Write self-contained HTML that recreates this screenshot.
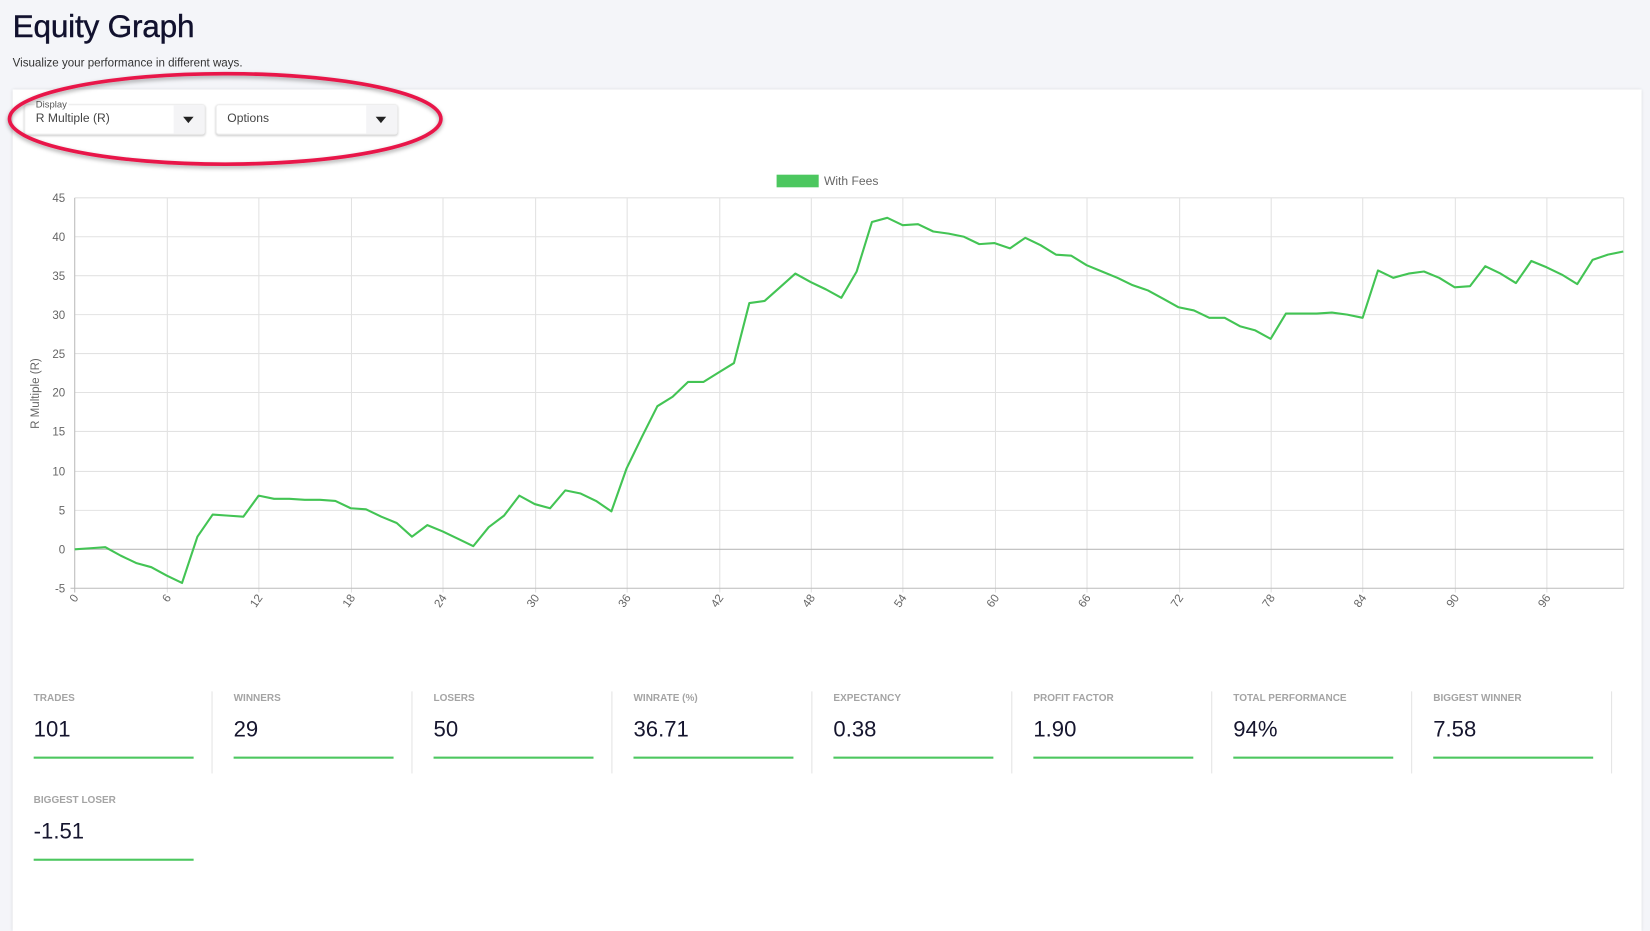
<!DOCTYPE html>
<html><head><meta charset="utf-8"><style>
html,body{margin:0;padding:0;width:1650px;height:898px;overflow:hidden;background:#f4f5f9;font-family:"Liberation Sans",sans-serif}
#w{position:absolute;left:0;top:0;width:1568px;height:854px;transform:scale(1.05230);transform-origin:0 0}
.a{position:absolute}
h1{position:absolute;left:12px;top:9px;margin:0;font-size:30px;font-weight:normal;color:#11112e;letter-spacing:-0.2px;-webkit-text-stroke:0.4px #11112e}
.sub{left:12px;top:54px;font-size:11px;color:#333}
.card{left:12px;top:85px;width:1548px;height:800px;background:#fff;box-shadow:0 0 3px rgba(0,0,0,.15)}
.sel{height:29px;background:#fff;border-radius:3px;box-shadow:0 1px 2px rgba(0,0,0,.2);border:1px solid #eee;box-sizing:border-box}
.sel .t{position:absolute;left:10px;top:7px;font-size:11.5px;color:#444}
.sel .b{position:absolute;right:0;top:0;width:29px;height:27px;background:#f4f4f6}
.sel .b:after{content:"";position:absolute;left:9px;top:11px;border-left:5px solid transparent;border-right:5px solid transparent;border-top:6px solid #222}
.st{position:absolute;width:190px;height:78px}
.st .l{position:absolute;left:20px;top:1px;font-size:9.5px;font-weight:bold;color:#a4a4a4}
.st .v{position:absolute;left:20px;top:25px;font-size:21px;color:#15152e}
.st .g{position:absolute;left:20px;top:62px;width:152px;height:2px;background:#4cc75f}
.st .s{position:absolute;right:0;top:0;width:1px;height:78px;background:#e4e4e4}
</style></head><body><div id="w">
<h1>Equity Graph</h1>
<div class="a sub">Visualize your performance in different ways.</div>
<div class="a card"></div>
<div class="a sel" style="left:23px;top:99px;width:172px"><div class="t">R Multiple (R)</div><div class="b"></div></div>
<div class="a" style="left:33px;top:94px;font-size:9px;color:#555;background:#fff;padding:0 1px">Display</div>
<div class="a sel" style="left:205px;top:99px;width:173px"><div class="t">Options</div><div class="b"></div></div>
<svg class="a" style="left:0;top:0" width="1568" height="640">
<defs><filter id="sh"><feDropShadow dx="0" dy="2" stdDeviation="2" flood-color="#000" flood-opacity=".35"/></filter></defs>
<ellipse cx="214" cy="113" rx="205" ry="43" fill="none" stroke="#e8194a" stroke-width="3.5" filter="url(#sh)"/>
<rect x="738" y="166" width="40" height="12" fill="#4cc75f"/>
<text x="783" y="176" font-size="11.5" fill="#666" font-family="Liberation Sans">With Fees</text>
<g stroke="#e2e2e2" stroke-width="1">
<line x1="71" y1="188" x2="1543" y2="188"/><line x1="71" y1="225" x2="1543" y2="225"/><line x1="71" y1="262" x2="1543" y2="262"/><line x1="71" y1="299" x2="1543" y2="299"/><line x1="71" y1="336" x2="1543" y2="336"/><line x1="71" y1="373" x2="1543" y2="373"/><line x1="71" y1="410" x2="1543" y2="410"/><line x1="71" y1="448" x2="1543" y2="448"/><line x1="71" y1="485" x2="1543" y2="485"/>
<line x1="159" y1="188" x2="159" y2="563"/><line x1="246" y1="188" x2="246" y2="563"/><line x1="334" y1="188" x2="334" y2="563"/><line x1="421" y1="188" x2="421" y2="563"/><line x1="509" y1="188" x2="509" y2="563"/><line x1="596" y1="188" x2="596" y2="563"/><line x1="684" y1="188" x2="684" y2="563"/><line x1="771" y1="188" x2="771" y2="563"/><line x1="858" y1="188" x2="858" y2="563"/><line x1="946" y1="188" x2="946" y2="563"/><line x1="1033" y1="188" x2="1033" y2="563"/><line x1="1121" y1="188" x2="1121" y2="563"/><line x1="1208" y1="188" x2="1208" y2="563"/><line x1="1295" y1="188" x2="1295" y2="563"/><line x1="1383" y1="188" x2="1383" y2="563"/><line x1="1470" y1="188" x2="1470" y2="563"/><line x1="1543" y1="188" x2="1543" y2="559"/>
</g>
<g stroke="#bbb"><line x1="71" y1="522" x2="1543" y2="522"/><line x1="67" y1="559" x2="1543" y2="559"/><line x1="71" y1="188" x2="71" y2="563"/></g>
<g font-size="11" fill="#666" text-anchor="end" font-family="Liberation Sans">
<text x="62" y="192">45</text><text x="62" y="229">40</text><text x="62" y="266">35</text><text x="62" y="303">30</text><text x="62" y="340">25</text><text x="62" y="377">20</text><text x="62" y="414">15</text><text x="62" y="452">10</text><text x="62" y="489">5</text><text x="62" y="526">0</text><text x="62" y="563">-5</text>
</g>
<text transform="translate(37,374) rotate(-90)" font-size="11" fill="#666" text-anchor="middle" font-family="Liberation Sans">R Multiple (R)</text>
<g font-size="11" fill="#666" text-anchor="end" font-family="Liberation Sans">
<text transform="translate(75,568) rotate(-55)">0</text><text transform="translate(163,568) rotate(-55)">6</text><text transform="translate(250,568) rotate(-55)">12</text><text transform="translate(338,568) rotate(-55)">18</text><text transform="translate(425,568) rotate(-55)">24</text><text transform="translate(513,568) rotate(-55)">30</text><text transform="translate(600,568) rotate(-55)">36</text><text transform="translate(688,568) rotate(-55)">42</text><text transform="translate(775,568) rotate(-55)">48</text><text transform="translate(862,568) rotate(-55)">54</text><text transform="translate(950,568) rotate(-55)">60</text><text transform="translate(1037,568) rotate(-55)">66</text><text transform="translate(1125,568) rotate(-55)">72</text><text transform="translate(1212,568) rotate(-55)">78</text><text transform="translate(1299,568) rotate(-55)">84</text><text transform="translate(1387,568) rotate(-55)">90</text><text transform="translate(1474,568) rotate(-55)">96</text>
</g>
<polyline id="pl" fill="none" stroke="#43c454" stroke-width="2" stroke-linejoin="round" points=""/>
</svg>
<script>
var ys=[522,521,520,528,535,539,547,554,510,489,490,491,471,474,474,475,475,476,483,484,491,497,510,499,505,512,519,501,490,471,479,483,466,469,476,486,445,415,386,377,363,363,354,345,288,286,273,260,268,275,283,258,211,207,214,213,220,222,225,232,231,236,226,233,242,243,252,258,264,271,276,284,292,295,302,302,310,314,322,298,298,298,297,299,302,257,264,260,258,264,273,272,253,260,269,248,254,261,270,247,242,239];
var p=ys.map(function(y,i){return (71+i*14.57).toFixed(1)+","+y}).join(" ");
document.getElementById("pl").setAttribute("points",p);
</script>
<div class="st" style="left:12px;top:657px"><div class="l">TRADES</div><div class="v">101</div><div class="g"></div><div class="s"></div></div>
<div class="st" style="left:202px;top:657px"><div class="l">WINNERS</div><div class="v">29</div><div class="g"></div><div class="s"></div></div>
<div class="st" style="left:392px;top:657px"><div class="l">LOSERS</div><div class="v">50</div><div class="g"></div><div class="s"></div></div>
<div class="st" style="left:582px;top:657px"><div class="l">WINRATE (%)</div><div class="v">36.71</div><div class="g"></div><div class="s"></div></div>
<div class="st" style="left:772px;top:657px"><div class="l">EXPECTANCY</div><div class="v">0.38</div><div class="g"></div><div class="s"></div></div>
<div class="st" style="left:962px;top:657px"><div class="l">PROFIT FACTOR</div><div class="v">1.90</div><div class="g"></div><div class="s"></div></div>
<div class="st" style="left:1152px;top:657px"><div class="l">TOTAL PERFORMANCE</div><div class="v">94%</div><div class="g"></div><div class="s"></div></div>
<div class="st" style="left:1342px;top:657px"><div class="l">BIGGEST WINNER</div><div class="v">7.58</div><div class="g"></div><div class="s"></div></div>
<div class="st" style="left:12px;top:754px"><div class="l">BIGGEST LOSER</div><div class="v">-1.51</div><div class="g"></div></div>
</div></body></html>
